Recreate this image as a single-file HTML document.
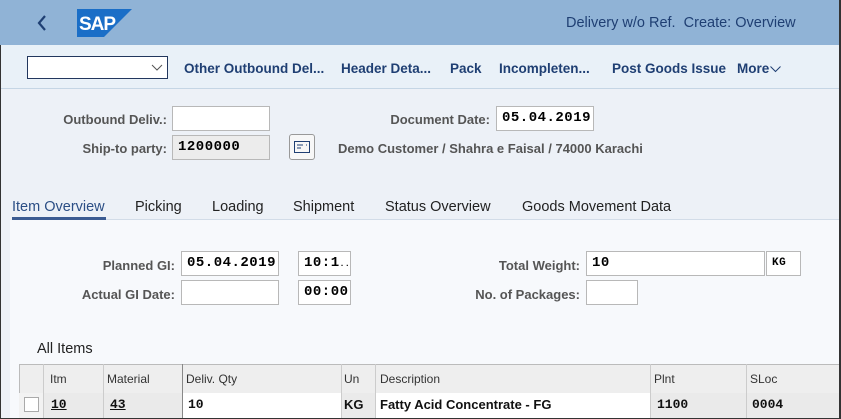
<!DOCTYPE html>
<html><head><meta charset="utf-8"><style>
*{box-sizing:border-box;margin:0;padding:0}
body{width:841px;height:419px;overflow:hidden;font-family:"Liberation Sans",Arial,sans-serif;background:#fff;position:relative}
.abs{position:absolute}
#frame{position:absolute;left:0;top:0;width:841px;height:419px;border:1px solid #333;border-top:none;background:#edf1f7}
#hdr{left:0;top:0;width:841px;height:45px;background:#90b3d6}
#tb{left:1px;top:45px;width:838px;height:44px;background:#e9f1f8;border-bottom:1px solid #c5d6e5}
.tbt{top:61px;font-size:13.5px;font-weight:bold;color:#1f3f73}
.lbl{font-size:13px;font-weight:bold;color:#555;text-align:right}
.inp{background:#fff;border:1px solid #b8b8b8;font-family:"Liberation Mono",monospace;font-weight:bold;font-size:14px;color:#000;padding-left:5px;line-height:22px;letter-spacing:0.5px}
.tab{top:199px;font-size:14.5px;color:#222}
.th{font-size:12px;color:#333;top:372px}
.td{font-size:13px;font-weight:bold;color:#111;top:397px}
.vl{width:1px;background:#ccc}
</style></head><body>
<div id="frame"></div>
<div id="hdr" class="abs"></div>
<svg class="abs" style="left:36px;top:15px" width="12" height="16"><path d="M9 1 L3 8 L9 15" stroke="#1f3f73" stroke-width="2.2" fill="none"/></svg>
<svg class="abs" style="left:77px;top:9px" width="55" height="28"><polygon points="0,0 55,0 27,28 0,28" fill="#1a6ec7"/><text x="2" y="21" font-family="Liberation Sans" font-weight="bold" font-size="19" fill="#fff" letter-spacing="-1">SAP</text></svg>
<div class="abs" style="left:566px;top:15px;font-size:14.5px;color:#1f3f73">Delivery w/o Ref.&nbsp; Create: Overview</div>
<div id="tb" class="abs"></div>
<div class="abs" style="left:27px;top:56px;width:141px;height:23px;background:#fff;border:1px solid #22375e"></div>
<svg class="abs" style="left:151px;top:64px" width="12" height="8"><path d="M1 1 L6 6 L11 1" stroke="#555" fill="none"/></svg>
<div class="abs tbt" style="left:184px">Other Outbound Del...</div>
<div class="abs tbt" style="left:341px">Header Deta...</div>
<div class="abs tbt" style="left:450px">Pack</div>
<div class="abs tbt" style="left:499px">Incompleten...</div>
<div class="abs tbt" style="left:612px">Post Goods Issue</div>
<div class="abs tbt" style="left:737px">More</div>
<svg class="abs" style="left:770px;top:66px" width="11" height="7"><path d="M0.5 0.5 L5.5 5.5 L10.5 0.5" stroke="#1f3f73" fill="none"/></svg>

<div class="abs lbl" style="left:40px;top:112px;width:127px">Outbound Deliv.:</div>
<div class="abs inp" style="left:172px;top:106px;width:98px;height:25px"></div>
<div class="abs lbl" style="left:40px;top:141px;width:127px">Ship-to party:</div>
<div class="abs inp" style="left:172px;top:135px;width:98px;height:25px;background:#ececec">1200000</div>
<div class="abs" style="left:289px;top:134px;width:26px;height:26px;border:1px solid #999;border-radius:3px;background:#f7f7f7"></div>
<svg class="abs" style="left:294px;top:141px" width="16" height="12"><rect x="0.5" y="0.5" width="15" height="11" fill="none" stroke="#1f3f73"/><line x1="3" y1="4" x2="9" y2="4" stroke="#1f3f73"/><line x1="3" y1="7" x2="7" y2="7" stroke="#1f3f73"/><line x1="12" y1="4" x2="13" y2="4" stroke="#1f3f73"/></svg>
<div class="abs lbl" style="left:340px;top:112px;width:150px">Document Date:</div>
<div class="abs inp" style="left:496px;top:106px;width:98px;height:25px">05.04.2019</div>
<div class="abs lbl" style="left:338px;top:141px;text-align:left">Demo Customer / Shahra e Faisal / 74000 Karachi</div>

<div class="abs tab" style="left:12px;color:#2b4e85">Item Overview</div>
<div class="abs" style="left:12px;top:217px;width:94px;height:3px;background:#3b5b92"></div>
<div class="abs tab" style="left:135px">Picking</div>
<div class="abs tab" style="left:212px">Loading</div>
<div class="abs tab" style="left:293px">Shipment</div>
<div class="abs tab" style="left:385px">Status Overview</div>
<div class="abs tab" style="left:522px">Goods Movement Data</div>
<div class="abs" style="left:106px;top:219px;width:733px;height:1px;background:#d2dce8"></div>
<div class="abs" style="left:10px;top:220px;width:829px;height:198px;background:#f7f9fc"></div>

<div class="abs lbl" style="left:60px;top:258px;width:115px">Planned GI:</div>
<div class="abs inp" style="left:181px;top:251px;width:98px;height:25px">05.04.2019</div>
<div class="abs inp" style="left:298px;top:251px;width:53px;height:25px">10:1<span style="font-size:8px">..</span></div>
<div class="abs lbl" style="left:60px;top:287px;width:115px">Actual GI Date:</div>
<div class="abs inp" style="left:181px;top:280px;width:98px;height:25px"></div>
<div class="abs inp" style="left:298px;top:280px;width:53px;height:25px">00:00</div>
<div class="abs lbl" style="left:420px;top:258px;width:160px">Total Weight:</div>
<div class="abs inp" style="left:586px;top:251px;width:179px;height:25px">10</div>
<div class="abs inp" style="left:766px;top:251px;width:35px;height:25px;font-size:11px">KG</div>
<div class="abs lbl" style="left:420px;top:287px;width:160px">No. of Packages:</div>
<div class="abs inp" style="left:586px;top:280px;width:52px;height:25px"></div>

<div class="abs" style="left:37px;top:341px;font-size:14.5px;color:#222">All Items</div>
<div class="abs" style="left:19px;top:364px;width:820px;height:29px;background:#eeeeee;border-top:1px solid #bbb;border-left:1px solid #bbb"></div>
<div class="abs" style="left:19px;top:393px;width:820px;height:26px;background:#fff;border-left:1px solid #bbb"></div>
<div class="abs" style="left:19px;top:393px;width:163px;height:26px;background:#eaeaea"></div>
<div class="abs" style="left:341px;top:393px;width:34px;height:26px;background:#eaeaea"></div>
<div class="abs" style="left:650px;top:393px;width:189px;height:26px;background:#eaeaea"></div>
<div class="abs" style="left:19px;top:393px;width:24px;height:26px;background:#f2f2f2"></div>
<div class="abs" style="left:24px;top:397px;width:15px;height:15px;background:#fff;border:1px solid #aaa"></div>
<div class="abs vl" style="left:43px;top:364px;height:55px"></div>
<div class="abs vl" style="left:103px;top:364px;height:55px"></div>
<div class="abs vl" style="left:182px;top:364px;height:55px;background:#888"></div>
<div class="abs vl" style="left:341px;top:364px;height:55px"></div>
<div class="abs vl" style="left:375px;top:364px;height:55px"></div>
<div class="abs vl" style="left:650px;top:364px;height:55px"></div>
<div class="abs vl" style="left:746px;top:364px;height:55px"></div>
<div class="abs th" style="left:50px">Itm</div>
<div class="abs th" style="left:107px">Material</div>
<div class="abs th" style="left:186px">Deliv. Qty</div>
<div class="abs th" style="left:344px">Un</div>
<div class="abs th" style="left:380px">Description</div>
<div class="abs th" style="left:654px">Plnt</div>
<div class="abs th" style="left:750px">SLoc</div>
<div class="abs td" style="left:51px;font-family:'Liberation Mono',monospace;text-decoration:underline">10</div>
<div class="abs td" style="left:110px;font-family:'Liberation Mono',monospace;text-decoration:underline">43</div>
<div class="abs td" style="left:188px;font-family:'Liberation Mono',monospace">10</div>
<div class="abs td" style="left:344px">KG</div>
<div class="abs td" style="left:380px">Fatty Acid Concentrate - FG</div>
<div class="abs td" style="left:657px;font-family:'Liberation Mono',monospace">1100</div>
<div class="abs td" style="left:752px;font-family:'Liberation Mono',monospace">0004</div>
<div class="abs" style="left:0;top:418px;width:841px;height:1px;background:#333"></div>
<div class="abs" style="left:839px;top:0;width:2px;height:419px;background:#333"></div>
<div class="abs" style="left:0;top:45px;width:1px;height:374px;background:#333"></div>
</body></html>
